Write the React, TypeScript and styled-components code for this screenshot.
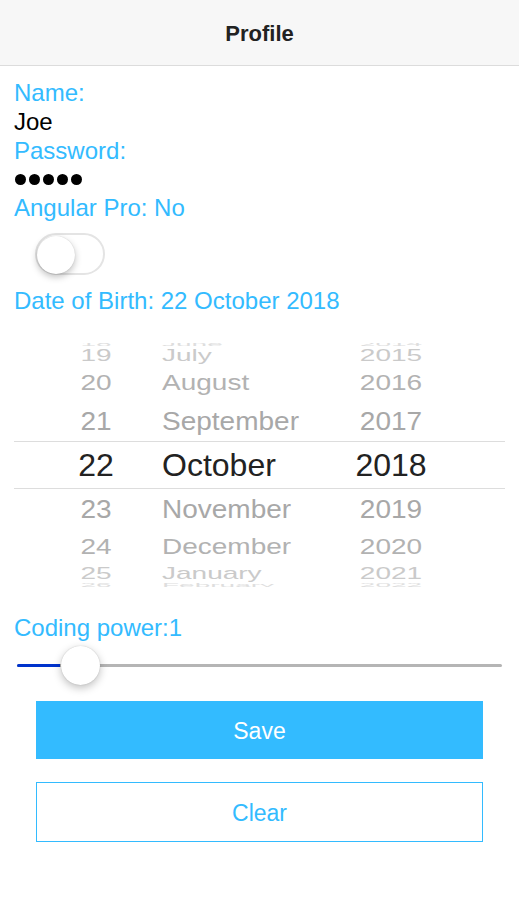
import styled, { createGlobalStyle } from 'styled-components';

const BLUE = '#33bbff';

const GlobalStyle = createGlobalStyle`
  html, body {
    margin: 0;
    padding: 0;
    background: #ffffff;
    font-family: "Liberation Sans", Arial, sans-serif;
  }
`;

const Page = styled.div`
  width: 519px;
  min-height: 900px;
  background: #ffffff;
`;

const Header = styled.header`
  height: 65px;
  background: #f7f7f7;
  border-bottom: 1px solid #dcdcdc;

  display: flex;
  align-items: center;
  justify-content: center;

  > .title {
    margin-top: 2px;
    font-size: 22px;
    font-weight: bold;
    color: #222222;
  }
`;

const Content = styled.main`
  padding: 13px 14px 0;
`;

const Line = styled.div<{ $accent?: boolean }>`
  font-size: 24px;
  line-height: 28.8px;
  color: ${(p) => (p.$accent ? BLUE : '#000000')};
  white-space: nowrap;
`;

const Dots = styled.div`
  height: 28.8px;
  display: flex;
  align-items: center;
  gap: 3px;
  padding-left: 1px;

  > span {
    width: 11px;
    height: 11px;
    border-radius: 50%;
    background: #000000;
  }
`;

const Toggle = styled.div<{ $on?: boolean }>`
  position: relative;
  box-sizing: border-box;
  width: 70px;
  height: 42px;
  margin: 10px 0 12px 21px;
  border-radius: 21px;
  border: 2px solid #e4e4e4;
  background: ${(p) => (p.$on ? BLUE : '#ffffff')};

  > .knob {
    position: absolute;
    top: 1px;
    left: ${(p) => (p.$on ? '29px' : '0')};
    width: 38px;
    height: 38px;
    border-radius: 50%;
    background: #ffffff;
    box-shadow: 0 3px 7px rgba(0, 0, 0, 0.25), 0 0 1px rgba(0, 0, 0, 0.2);
  }
`;

const Picker = styled.div`
  position: relative;
  height: 244px;
  margin-top: 27px;
  overflow: hidden;

  display: grid;
  grid-template-columns: 148px 158px 142px 1fr;

  > .band {
    position: absolute;
    left: 0;
    right: 0;
    top: 98px;
    height: 46px;
    border-top: 1px solid #dddddd;
    border-bottom: 1px solid #dddddd;
    pointer-events: none;
  }
`;

const Wheel = styled.div<{ $align: 'left' | 'center'; $pad?: number }>`
  position: relative;
  height: 100%;
  padding-left: ${(p) => p.$pad || 0}px;
  text-align: ${(p) => p.$align};
`;

const WheelItem = styled.div<{ $selected?: boolean }>`
  position: absolute;
  left: 0;
  right: 0;
  top: 50%;
  height: 44px;
  margin-top: -22px;
  line-height: 44px;
  white-space: nowrap;
  font-size: ${(p) => (p.$selected ? '32px' : '28px')};
  color: ${(p) => (p.$selected ? '#222222' : '#a5a5a5')};
`;

const SliderLabel = styled(Line)`
  margin-top: 27px;
`;

const Slider = styled.div`
  position: relative;
  height: 40px;
  margin: 3px 3px 0;

  display: flex;
  align-items: center;

  > .track {
    flex: 1;
    height: 3px;
    background: #b5b5b5;
    border-radius: 2px;
    overflow: hidden;
  }

  > .track > .fill {
    height: 100%;
    background: #0033cc;
  }

  > .knob {
    position: absolute;
    top: 0;
    width: 39px;
    height: 39px;
    margin-left: -19px;
    border-radius: 50%;
    background: #ffffff;
    box-shadow: 0 3px 8px rgba(0, 0, 0, 0.25), 0 0 1px rgba(0, 0, 0, 0.25);
  }
`;

const Button = styled.button<{ $outline?: boolean }>`
  display: block;
  box-sizing: border-box;
  width: calc(100% - 44px);
  margin: ${(p) => (p.$outline ? '23px' : '15px')} 22px 0;
  height: ${(p) => (p.$outline ? '60px' : '58px')};
  border: 1px solid ${BLUE};
  border-radius: 0;
  background: ${(p) => (p.$outline ? '#ffffff' : BLUE)};
  color: ${(p) => (p.$outline ? BLUE : '#ffffff')};
  font-family: "Liberation Sans", Arial, sans-serif;
  font-size: 23px;
  padding: 3px 0 0;
`;

const STEP = (21.3 * Math.PI) / 180;
const RADIUS = 121;
const FADE = ['#222222', '#a8a8a8', '#b2b2b2', '#cacaca', '#dedede'];

function WheelColumn({
  values,
  selected,
  align,
  pad,
}: {
  values: string[];
  selected: number;
  align: 'left' | 'center';
  pad?: number;
}) {
  return (
    <Wheel $align={align} $pad={pad}>
      {values.map((value, index) => {
        const offset = index - selected;
        const angle = offset * STEP;
        if (Math.abs(angle) >= Math.PI / 2) return null;
        const y = RADIUS * Math.sin(angle);
        const sy = Math.cos(angle) ** 0.7;
        return (
          <WheelItem
            key={value}
            $selected={offset === 0}
            style={{
              transform: `translateY(${y}px) scaleY(${sy})`,
              color: FADE[Math.abs(offset)],
              left: pad || 0,
            }}
          >
            {value}
          </WheelItem>
        );
      })}
    </Wheel>
  );
}

const days = ['17', '18', '19', '20', '21', '22', '23', '24', '25', '26', '27'];
const months = [
  'May',
  'June',
  'July',
  'August',
  'September',
  'October',
  'November',
  'December',
  'January',
  'February',
  'March',
];
const years = ['2013', '2014', '2015', '2016', '2017', '2018', '2019', '2020', '2021', '2022', '2023'];

function App() {
  const power = 1;
  return (
    <Page>
      <GlobalStyle />
      <Header>
        <div className="title">Profile</div>
      </Header>
      <Content>
        <Line $accent>Name:</Line>
        <Line>Joe</Line>
        <Line $accent>Password:</Line>
        <Dots>
          {[0, 1, 2, 3, 4].map((i) => (
            <span key={i} />
          ))}
        </Dots>
        <Line $accent>Angular Pro: No</Line>
        <Toggle>
          <div className="knob" />
        </Toggle>
        <Line $accent>Date of Birth: 22 October 2018</Line>
        <Picker>
          <WheelColumn values={days} selected={5} align="center" pad={16} />
          <WheelColumn values={months} selected={5} align="left" />
          <WheelColumn values={years} selected={5} align="center" />
          <div />
          <div className="band" />
        </Picker>
        <SliderLabel $accent>Coding power:{power}</SliderLabel>
        <Slider>
          <div className="track">
            <div className="fill" style={{ width: 43 }} />
          </div>
          <div className="knob" style={{ left: 63 }} />
        </Slider>
        <Button>Save</Button>
        <Button $outline>Clear</Button>
      </Content>
    </Page>
  );
}

export default App;
